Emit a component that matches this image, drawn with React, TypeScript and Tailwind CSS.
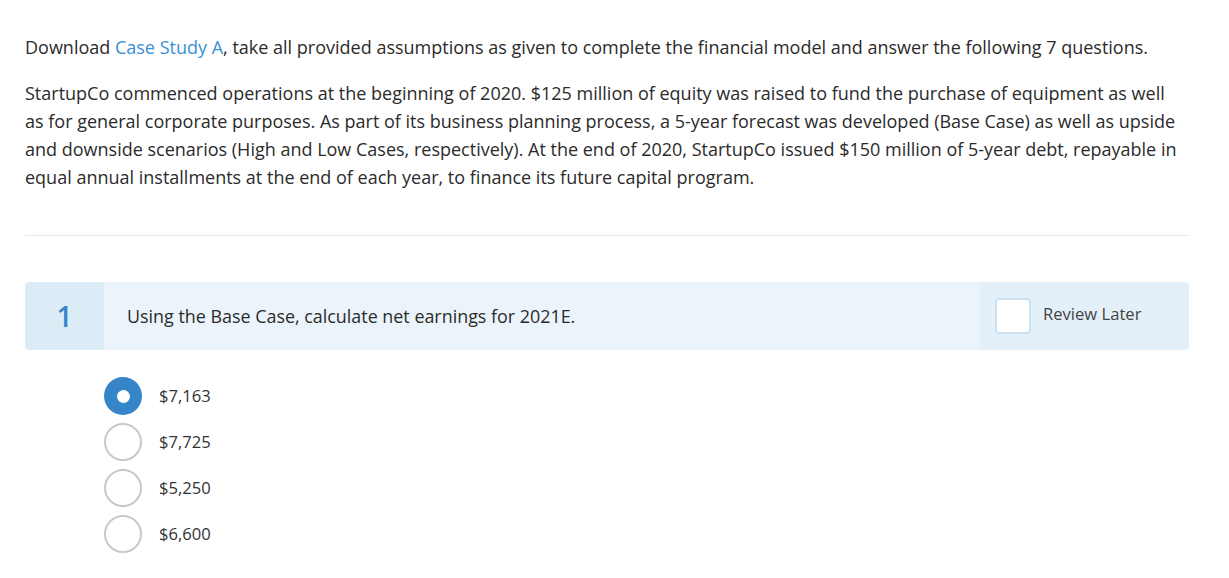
const options = ["$7,163", "$7,725", "$5,250", "$6,600"];

const App = () => {
  const selected = 0;

  return (
    <div className="min-h-screen bg-white font-['Open_Sans',sans-serif] text-[#2b2b2b]">
      <div className="w-[1164px] ml-[25px] pt-[33px]">
        <p className="text-[18px] leading-[28px]">
          Download <a className="text-[#3a8fd6]">Case Study A</a>, take all provided assumptions as given to complete the financial model and answer the following 7 questions.
        </p>
        <p className="mt-[18px] text-[18px] leading-[28px] pr-[10px]">
          StartupCo commenced operations at the beginning of 2020. $125 million of equity was raised to fund the purchase of equipment as well as for general corporate purposes. As part of its business planning process, a 5-year forecast was developed (Base Case) as well as upside and downside scenarios (High and Low Cases, respectively). At the end of 2020, StartupCo issued $150 million of 5-year debt, repayable in equal annual installments at the end of each year, to finance its future capital program.
        </p>

        <div className="mt-[44px] h-px bg-[#e8e8e8]" />

        <div className="mt-[46px] flex h-[68px] rounded-[4px] overflow-hidden bg-[#ebf4fb]">
          <div className="w-[79px] flex items-center justify-center bg-[#dcecf6] text-[28px] font-semibold text-[#3585c8]">
            1
          </div>
          <div className="flex-1 flex items-center pl-[23px] text-[17.9px]">
            Using the Base Case, calculate net earnings for 2021E.
          </div>
          <div className="w-[209px] flex items-center pl-[15px] bg-[#e4f0f9]">
            <div className="w-[36px] h-[36px] rounded-[4px] bg-white border-2 border-[#cbe2f3]" />
            <span className="ml-[12px] text-[16.6px] text-[#444444] -mt-[3px]">Review Later</span>
          </div>
        </div>

        <div className="mt-[27px] ml-[79px] flex flex-col gap-[8px]">
          {options.map((opt, i) => (
            <label key={opt} className="flex items-center h-[38px]">
              {i === selected ? (
                <span className="w-[38px] h-[38px] rounded-full bg-[#3585c8] flex items-center justify-center">
                  <span className="w-[13px] h-[13px] rounded-full bg-white" />
                </span>
              ) : (
                <span className="w-[38px] h-[38px] rounded-full border-2 border-[#c8c8c8] bg-white" />
              )}
              <span className="ml-[17px] text-[16.6px] text-[#333333]">{opt}</span>
            </label>
          ))}
        </div>
      </div>
    </div>
  );
};

export default App;
